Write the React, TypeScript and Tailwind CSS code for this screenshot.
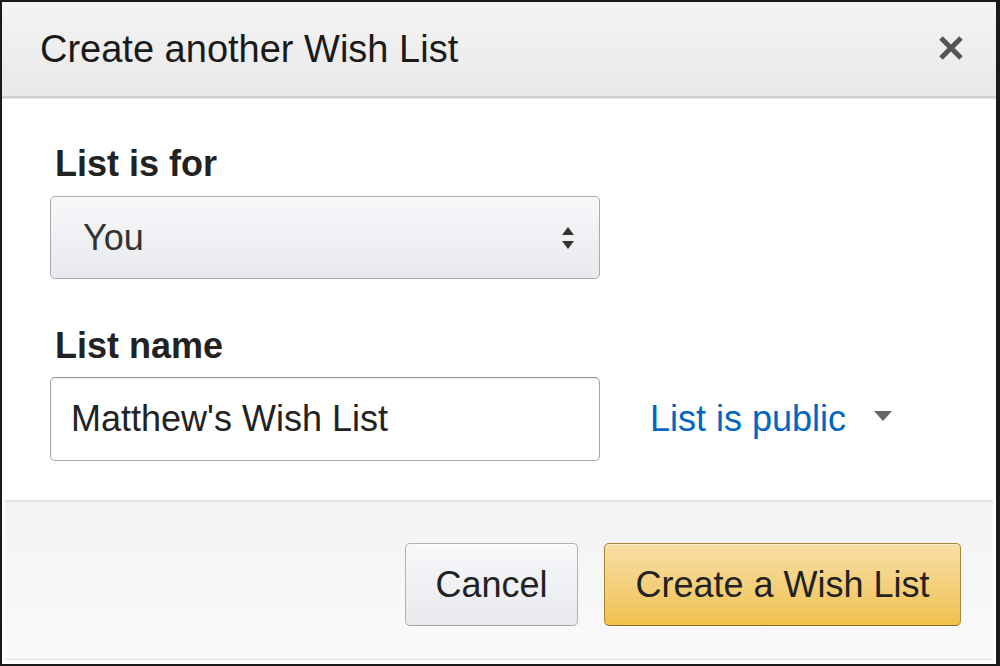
import React from "react";

export default function App() {
  const font = { fontFamily: '"Liberation Sans", Arial, sans-serif' };
  return (
    <div
      className="w-[1000px] h-[666px] bg-[#1a1a1a] pt-[2px] pl-[2px] pr-[4px] pb-[2px]"
      style={font}
    >
      <div className="h-full w-full bg-white flex flex-col">
        {/* Header */}
        <div className="h-[96px] shrink-0 flex items-center justify-between pl-[38px] pr-[32px] bg-gradient-to-b from-[#f4f4f4] to-[#e9e9e9] border-b-2 border-[#cfcfcf] shadow-[0_1px_0_#e4e4e4]">
          <div className="text-[38px] leading-none text-[#1a1a1a] tracking-[0px]">
            Create another Wish List
          </div>
          <svg width="26" height="26" viewBox="0 0 26 26" className="mt-[-2px]">
            <path
              d="M3 3 L23 23 M23 3 L3 23"
              stroke="#555"
              strokeWidth="5"
              strokeLinecap="butt"
            />
          </svg>
        </div>

        {/* Body */}
        <div className="flex-1 pl-[48px] pr-[40px] pt-[45px]">
          <div className="pl-[5px] text-[36px] font-bold leading-[41px] text-[#222]">
            List is for
          </div>
          <div className="mt-[12px] w-[550px] h-[83px] rounded-[5px] border border-[#a9abae] bg-gradient-to-b from-[#f7f8fa] to-[#e7e9ec] shadow-[inset_0_1px_0_rgba(255,255,255,0.6)] flex items-center justify-between pl-[32px] pr-[24px]">
            <span className="text-[36px] text-[#333] leading-none">You</span>
            <svg width="14" height="26" viewBox="0 0 14 26">
              <path d="M7 2 L13 10 L1 10 Z" fill="#333" />
              <path d="M1 16 L13 16 L7 24 Z" fill="#333" />
            </svg>
          </div>

          <div className="mt-[46px] pl-[5px] text-[36px] font-bold leading-[41px] text-[#222]">
            List name
          </div>
          <div className="mt-[11px] flex items-center">
            <div className="w-[550px] h-[84px] rounded-[5px] border border-[#a6a6a6] border-t-[#949494] bg-white shadow-[inset_0_1px_2px_rgba(0,0,0,0.08)] flex items-center pl-[20px]">
              <span className="text-[36px] text-[#222] leading-none">
                Matthew's Wish List
              </span>
            </div>
            <div className="ml-[50px] flex items-center">
              <span className="text-[36px] text-[#0066c0] leading-none">
                List is public
              </span>
              <svg width="18" height="10" viewBox="0 0 18 10" className="ml-[28px] mt-[-6px]">
                <path d="M0 0 L18 0 L9 10 Z" fill="#666" />
              </svg>
            </div>
          </div>
        </div>

        {/* Footer */}
        <div className="h-[160px] shrink-0 mx-[3px] mb-[4px] border-t-2 border-[#e3e3e3] border-b border-b-[#e0e0e0] bg-gradient-to-b from-[#f3f3f3] to-[#fafafa] flex items-start justify-end pr-[32px] pt-[41px]">
          <button className="w-[173px] h-[83px] rounded-[5px] border border-[#adb1b8] border-b-[#a2a6ac] bg-gradient-to-b from-[#f7f8fa] to-[#e7e9ec] shadow-[inset_0_1px_0_rgba(255,255,255,0.6)] text-[36px] text-[#222] leading-none">
            Cancel
          </button>
          <button className="ml-[26px] w-[357px] h-[83px] rounded-[5px] border border-[#a88734] border-b-[#846a29] bg-gradient-to-b from-[#f7dfa5] to-[#f0c14b] shadow-[inset_0_1px_0_rgba(255,255,255,0.4)] text-[36px] text-[#222] leading-none">
            Create a Wish List
          </button>
        </div>
      </div>
    </div>
  );
}
